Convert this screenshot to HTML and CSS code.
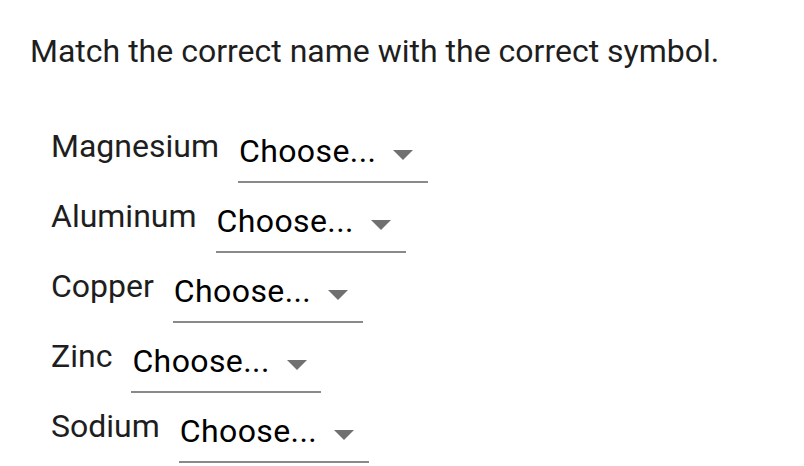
FILE: index.html
```html
<!DOCTYPE html>
<html>
<head>
<meta charset="utf-8">
<link rel="stylesheet" href="styles.css">
</head>
<body>
<div class="page">
  <p class="title">Match the correct name with the correct symbol.</p>
  <div class="list">
    <div class="row"><span class="label">Magnesium</span><span class="select"><span class="val">Choose...</span><svg class="arrow" width="20" height="10" viewBox="0 0 20 10"><path d="M0 0H20L10 10Z" fill="#707070"/></svg></span></div>
    <div class="row"><span class="label">Aluminum</span><span class="select"><span class="val">Choose...</span><svg class="arrow" width="20" height="10" viewBox="0 0 20 10"><path d="M0 0H20L10 10Z" fill="#707070"/></svg></span></div>
    <div class="row"><span class="label">Copper</span><span class="select"><span class="val">Choose...</span><svg class="arrow" width="20" height="10" viewBox="0 0 20 10"><path d="M0 0H20L10 10Z" fill="#707070"/></svg></span></div>
    <div class="row"><span class="label">Zinc</span><span class="select"><span class="val">Choose...</span><svg class="arrow" width="20" height="10" viewBox="0 0 20 10"><path d="M0 0H20L10 10Z" fill="#707070"/></svg></span></div>
    <div class="row"><span class="label">Sodium</span><span class="select"><span class="val">Choose...</span><svg class="arrow" width="20" height="10" viewBox="0 0 20 10"><path d="M0 0H20L10 10Z" fill="#707070"/></svg></span></div>
  </div>
</div>
</body>
</html>
```
FILE: styles.css
```css
html, body {
  margin: 0;
  padding: 0;
  background: #ffffff;
}
.page {
  font-family: Roboto, "Liberation Sans", sans-serif;
  color: #1e1e1e;
  padding: 31px 0 0 30px;
}
.title {
  margin: 0;
  font-size: 32px;
  line-height: 40px;
}
.list {
  margin-top: 55px;
  padding-left: 21px;
  display: flex;
  flex-direction: column;
}
.row {
  display: flex;
  align-items: flex-start;
  gap: 19px;
  height: 70px;
}
.label {
  font-size: 32px;
  line-height: 40px;
}
.select {
  width: 190px;
  height: 52px;
  box-sizing: border-box;
  border-bottom: 2px solid #8a8a8a;
  display: flex;
  align-items: flex-start;
  margin-top: 5px;
  padding-left: 1px;
  color: #000;
  font-size: 32px;
}
.val {
  line-height: 40px;
  letter-spacing: 0.4px;
}
.arrow {
  margin-left: 17px;
  margin-top: 19px;
}
```
